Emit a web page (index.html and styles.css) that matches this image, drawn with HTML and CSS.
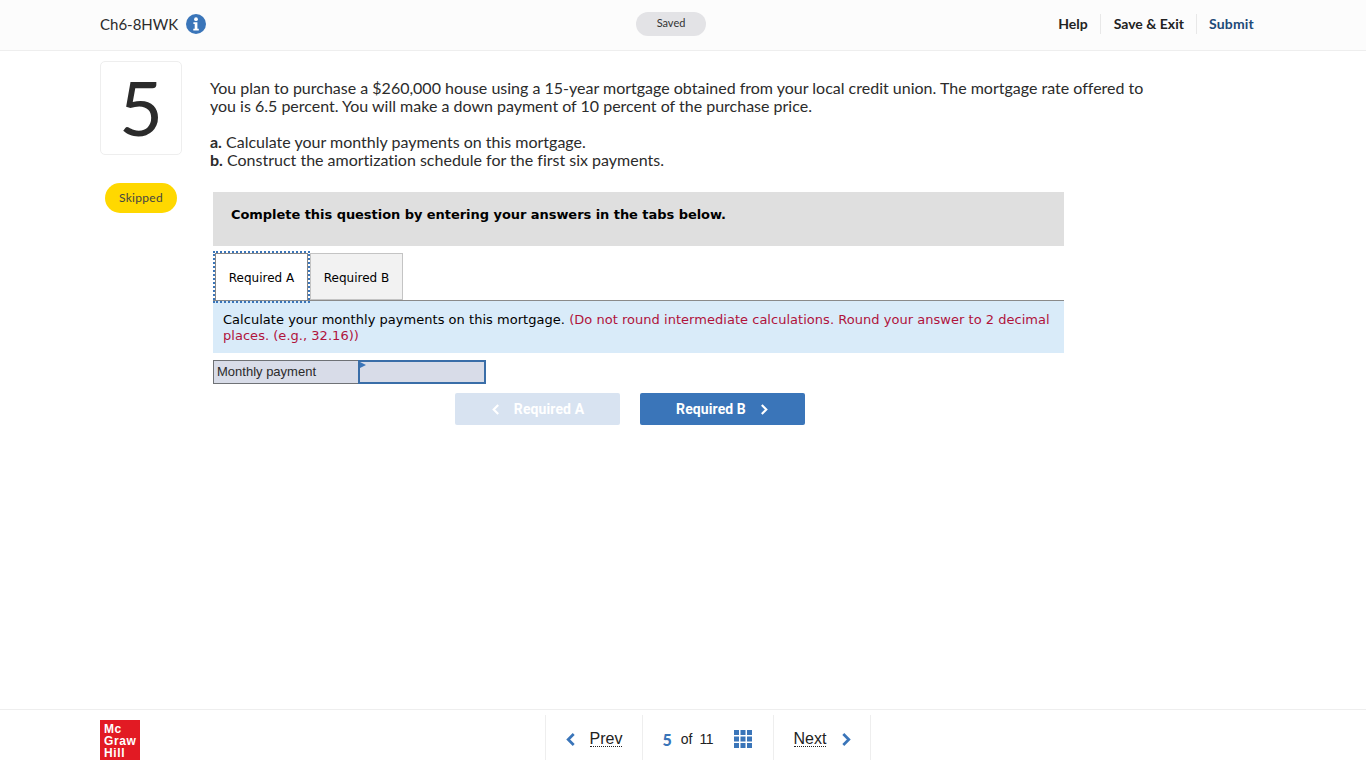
FILE: index.html
```html
<!DOCTYPE html>
<html lang="en">
<head>
<meta charset="utf-8">
<title>Ch6-8HWK</title>
<link rel="stylesheet" href="styles.css">
</head>
<body>
<header class="topbar">
  <div class="title-group">
    <span class="assign-title">Ch6-8HWK</span>
    <svg class="info-icon" viewBox="0 0 20 20" width="20" height="20" aria-hidden="true">
      <circle cx="10" cy="10" r="10" fill="#3a75b9"/>
      <circle cx="10" cy="5.2" r="1.9" fill="#fff"/>
      <path d="M7.4 8.2h4v6.6h1.4v1.7H7.3v-1.7h1.4v-4.9H7.4z" fill="#fff"/>
    </svg>
  </div>
  <div class="saved-pill">Saved</div>
  <nav class="top-links">
    <a class="top-link">Help</a>
    <a class="top-link">Save &amp; Exit</a>
    <a class="top-link submit">Submit</a>
  </nav>
</header>

<main class="content">
  <aside class="side">
    <div class="qnum">5</div>
    <div class="skipped">Skipped</div>
  </aside>
  <section class="question">
    <p class="qtext">You plan to purchase a $260,000 house using a 15-year mortgage obtained from your local credit union. The mortgage rate offered to you is 6.5 percent. You will make a down payment of 10 percent of the purchase price.</p>
    <p class="qparts"><b>a.</b> Calculate your monthly payments on this mortgage.<br><b>b.</b> Construct the amortization schedule for the first six payments.</p>
    <div class="work">
      <div class="notice">Complete this question by entering your answers in the tabs below.</div>
      <div class="tabs">
        <div class="tab active">Required A</div>
        <div class="tab">Required B</div>
      </div>
      <div class="instr">Calculate your monthly payments on this mortgage. <span class="hint">(Do not round intermediate calculations. Round your answer to 2 decimal places. (e.g., 32.16))</span></div>
      <div class="answer-row">
        <div class="answer-label">Monthly payment</div>
        <div class="answer-input"></div>
      </div>
      <div class="tab-nav">
        <button class="nav-btn disabled">
          <svg class="chev" viewBox="0 0 10 14" width="9" height="13" aria-hidden="true"><path d="M8 2 3 7l5 5" fill="none" stroke="#fff" stroke-width="2.4"/></svg>
          <span>Required A</span>
        </button>
        <button class="nav-btn">
          <span>Required B</span>
          <svg class="chev" viewBox="0 0 10 14" width="9" height="13" aria-hidden="true"><path d="m2 2 5 5-5 5" fill="none" stroke="#fff" stroke-width="2.4"/></svg>
        </button>
      </div>
    </div>
  </section>
</main>

<footer class="footer">
  <div class="logo"><span>Mc</span><span>Graw</span><span>Hill</span></div>
  <div class="pager">
    <a class="pager-cell prev">
      <svg viewBox="0 0 12 16" width="11" height="15" aria-hidden="true"><path d="M9.5 2 3.5 8l6 6" fill="none" stroke="#3a75b9" stroke-width="3"/></svg>
      <span class="pager-link">Prev</span>
    </a>
    <div class="pager-cell count">
      <b class="cur">5</b><span class="of">of</span><span class="total">11</span>
      <svg class="grid-icon" viewBox="0 0 18 18" width="18" height="18" aria-hidden="true">
        <path fill="#3a75b9" d="M0 0h5v5H0zM6.500 0h5v5h-5zM13 0h5v5h-5zM0 6.500h5v5H0zM6.500 6.500h5v5h-5zM13 6.500h5v5h-5zM0 13h5v5H0zM6.500 13h5v5h-5zM13 13h5v5h-5z"/>
      </svg>
    </div>
    <a class="pager-cell next">
      <span class="pager-link">Next</span>
      <svg viewBox="0 0 12 16" width="11" height="15" aria-hidden="true"><path d="m2.500 2 6 6-6 6" fill="none" stroke="#3a75b9" stroke-width="3"/></svg>
    </a>
  </div>
</footer>
</body>
</html>
```
FILE: styles.css
```css
* { box-sizing: border-box; }
html, body { height: 100%; }
body {
  margin: 0;
  height: 768px;
  overflow: hidden;
  background: #fff;
  color: #222;
  font-family: Lato, "Open Sans", sans-serif;
  font-variant-ligatures: none;
  display: flex;
  flex-direction: column;
}
.topbar {
  height: 51px;
  flex: none;
  background: #fcfcfc;
  border-bottom: 1px solid #eee;
  display: grid;
  grid-template-columns: 536px 70px 1fr;
  align-items: center;
  padding: 0 112px 2px 100px;
}
.title-group { display: flex; align-items: center; gap: 8px; }
.assign-title { font-size: 15px; line-height: 18px; color: #2b2b2b; padding-bottom: 1px; }
.info-icon { display: block; }
.saved-pill {
  width: 70px;
  height: 24px;
  border-radius: 12px;
  background: #e3e3e6;
  font-size: 11px;
  padding-bottom: 3px;
  display: flex;
  align-items: center;
  justify-content: center;
  color: #333;
}
.top-links { display: flex; justify-content: flex-end; align-items: center; }
.top-link {
  font-size: 14px;
  font-weight: 700;
  color: #222;
  line-height: 20px;
  padding: 0 12px 0 13px;
  border-left: 1px solid #e8e8e8;
}
.top-link:first-child { border-left: 0; }
.top-link.submit { color: #1d4a78; padding: 0 0 0 12px; letter-spacing: 0.2px; }

.content {
  flex: 1;
  display: flex;
  gap: 28px;
  padding: 10px 0 0 100px;
}
.side { width: 82px; flex: none; display: flex; flex-direction: column; align-items: center; }
.qnum {
  width: 82px;
  height: 94px;
  border: 1px solid #eee;
  border-radius: 5px;
  font-size: 76px;
  line-height: 90px;
  text-align: center;
  color: #2b2b2b;
}
.skipped {
  margin-top: 28px;
  width: 72px;
  height: 30px;
  border-radius: 15px;
  background: #ffd800;
  font-size: 12px;
  letter-spacing: 0.3px;
  padding-bottom: 1px;
  color: #444;
  display: flex;
  align-items: center;
  justify-content: center;
}
.question { width: 940px; padding-top: 18px; font-size: 16px; line-height: 18px; color: #2b2b2b; }
.qtext { margin: 0 0 18px; }
.qparts { margin: 0 0 23px; }
.qparts b { font-weight: 700; }

.work { width: 851px; margin-left: 3px; font-family: "DejaVu Sans", Verdana, sans-serif; color: #000; }
.notice {
  height: 54px;
  background: #dfdfdf;
  padding: 14px 18px;
  font-size: 13px;
  font-weight: 700;
  letter-spacing: -0.05px;
  line-height: 17px;
}
.tabs { display: flex; padding: 7px 0 0 2px; height: 55px; border-bottom: 1px solid #8a8a8a; }
.tab {
  width: 93px;
  height: 47px;
  padding-top: 2px;
  border: 1px solid #c4c4c4;
  background: #f2f2f2;
  font-size: 12px;
  display: flex;
  align-items: center;
  justify-content: center;
}
.tab.active {
  background: #fff;
  border: 1px solid #888;
  outline: 2px dotted #3a75b9;
  height: 48px;
  margin-right: 2px;
}
.instr {
  height: 52px;
  background: #d9ebf9;
  padding: 11px 10px 0;
  font-size: 13px;
  letter-spacing: 0.03px;
  line-height: 16px;
}
.hint { color: #b0133c; }
.answer-row {
  display: flex;
  width: 273px;
  height: 24px;
  margin-top: 7px;
  background: #d8dce8;
  border: 1px solid #6f7276;
  font-family: "Liberation Sans", Arial, sans-serif;
  font-size: 13px;
  color: #2b2b2b;
}
.answer-label { width: 145px; padding-left: 3px; line-height: 21px; }
.answer-input {
  flex: 1;
  position: relative;
  border: 2px solid #3a6ea8;
  margin: -1px;
  background: #d8dce8;
}
.answer-input::before {
  content: "";
  position: absolute;
  left: 0;
  top: 0;
  border-left: 6px solid #3a75b9;
  border-top: 3px solid transparent;
  border-bottom: 3px solid transparent;
}
.tab-nav { display: flex; justify-content: center; gap: 20px; margin-top: 9px; width: 834px; }
.nav-btn {
  width: 165px;
  height: 32px;
  border: 0;
  border-radius: 2px;
  background: #3a75b9;
  color: #fff;
  font-family: Roboto, sans-serif;
  font-size: 14px;
  font-weight: 700;
  letter-spacing: 0.1px;
  display: flex;
  align-items: center;
  justify-content: center;
  gap: 14px;
  padding: 0;
}
.nav-btn.disabled { background: #d8e3f1; }

.footer {
  height: 59px;
  flex: none;
  border-top: 1px solid #eee;
  position: relative;
  display: flex;
  justify-content: center;
  padding-top: 5px;
}
.logo {
  position: absolute;
  left: 100px;
  top: 10px;
  width: 40px;
  height: 40px;
  background: #e21a23;
  color: #fff;
  font-family: "Liberation Sans", sans-serif;
  font-weight: 700;
  font-size: 12px;
  letter-spacing: 0.6px;
  padding: 3px 0 0 4px;
  display: flex;
  flex-direction: column;
  gap: 0;
}
.logo span { height: 12px; line-height: 12px; overflow: hidden; }
.pager { display: flex; height: 45px; font-family: "Liberation Sans", Arial, sans-serif; font-size: 16px; color: #222; margin-left: 49px; }
.pager-cell {
  display: flex;
  align-items: center;
  border-left: 1px solid #eee;
  height: 100%;
  padding-top: 3px;
}
.pager svg { display: block; }
.prev { width: 97px; padding-left: 19px; gap: 14px; }
.count { width: 131px; padding-left: 20px; font-size: 14px; }
.cur { color: #3a75b9; font-size: 16px; font-family: Lato, sans-serif; font-weight: 900; }
.of { margin: 0 7px 0 9px; }
.total { letter-spacing: -0.5px; }
.grid-icon { margin-left: 21px; }
.next { width: 98px; padding-left: 20px; gap: 15px; border-right: 1px solid #eee; }
.pager-link { border-bottom: 1px dotted #222; line-height: 14px; }
```
